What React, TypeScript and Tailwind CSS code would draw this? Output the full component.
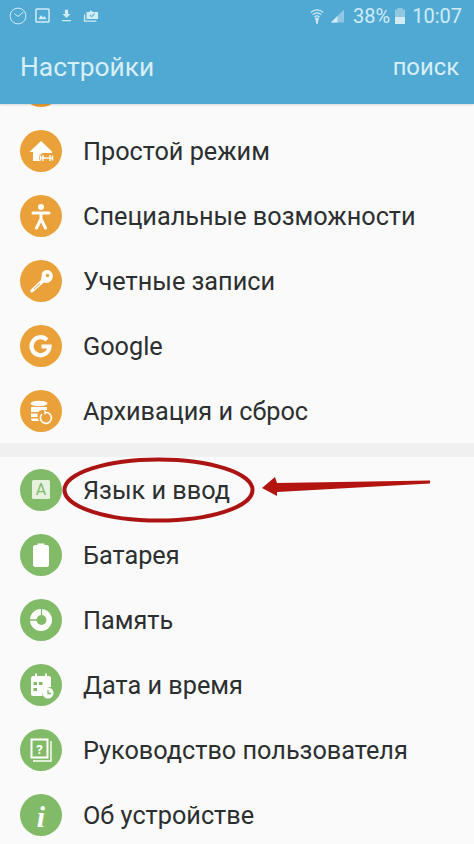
import React from 'react';

const ORANGE = 'bg-[#eba13a]';
const GREEN = 'bg-[#82bb68]';

// Row icons, drawn on a 42x42 grid in white
const HomeIcon = () => (
  <svg viewBox="0 0 42 42" className="w-[42px] h-[42px]">
    <path d="M21 11 L9.5 22 H13 V31 H20 C18 28 19 24 23 23 H32 V21.5 Z" fill="#fff" />
    <path d="M20 28 H33" stroke="#fff" strokeWidth="1.4" fill="none" />
    <path d="M20.5 25.5 V30.5 M23 25 V31 M30 25 V31 M32.5 25.5 V30.5" stroke="#fff" strokeWidth="1.4" fill="none" />
  </svg>
);
const PersonIcon = () => (
  <svg viewBox="0 0 42 42" className="w-[42px] h-[42px]">
    <circle cx="21" cy="12" r="3" fill="#fff" />
    <path d="M13 18 H29 M21 18 V25 M21 24 L16.5 33 M21 24 L25.5 33" stroke="#fff" strokeWidth="3" fill="none" strokeLinecap="round" />
  </svg>
);
const KeyIcon = () => (
  <svg viewBox="0 0 42 42" className="w-[42px] h-[42px]">
    <path d="M22 13 C24 9 30 9 32 13 C34 17 32 22 27 23 L24 22.5 L13 32 C11 33.5 9.5 31 11 29.5 L21 20 Z" fill="#fff" />
    <circle cx="27.5" cy="15.5" r="1.7" fill="#eba13a" />
    <path d="M14 29 L20 23.5" stroke="#eba13a" strokeWidth="1" />
  </svg>
);
const GoogleIcon = () => (
  <svg viewBox="0 0 42 42" className="w-[42px] h-[42px]">
    <path d="M27 15 A9 9 0 1 0 29.5 21.5 H21.5" stroke="#fff" strokeWidth="4.2" fill="none" />
  </svg>
);
const BackupIcon = () => (
  <svg viewBox="0 0 42 42" className="w-[42px] h-[42px]">
    <ellipse cx="19" cy="13.5" rx="8.5" ry="2.8" fill="#fff" />
    <path d="M11 17 H27 V20 H22 C20 20.5 19 21 18.5 22 H11 Z M11 23.5 H17.5 L17.5 27 H11 Z M11 28.5 H18 L19 31 H13 C12 31 11 30 11 29 Z" fill="#fff" />
    <path d="M22 24 A5.5 5.5 0 1 0 27 22.5" stroke="#fff" strokeWidth="1.6" fill="none" />
    <path d="M24 20 L27.5 22.5 L24.5 25 Z" fill="#fff" />
  </svg>
);
const LanguageIcon = () => (
  <svg viewBox="0 0 42 42" className="w-[42px] h-[42px]">
    <rect x="12" y="11" width="18" height="19" rx="1.5" fill="#e6f1e0" />
    <text x="21" y="26" textAnchor="middle" fontSize="16" fontFamily="Roboto, sans-serif" fill="#82bb68">A</text>
  </svg>
);
const BatteryIcon = () => (
  <svg viewBox="0 0 42 42" className="w-[42px] h-[42px]">
    <path d="M17.5 11 V9.5 H24.5 V11 H27 C28 11 29 12 29 13 V31 C29 32 28 33 27 33 H15 C14 33 13 32 13 31 V13 C13 12 14 11 15 11 Z" fill="#fff" />
  </svg>
);
const MemoryIcon = () => (
  <svg viewBox="0 0 42 42" className="w-[42px] h-[42px]">
    <circle cx="21" cy="21" r="11" fill="#fff" />
    <circle cx="21.5" cy="21" r="5" fill="#82bb68" />
    <path d="M21.5 9 V17 M9 21 H17" stroke="#82bb68" strokeWidth="1.3" />
  </svg>
);
const CalendarIcon = () => (
  <svg viewBox="0 0 42 42" className="w-[42px] h-[42px]">
    <path d="M13 12 H15 V9.5 H17 V12 H25 V9.5 H27 V12 H29 C30 12 31 13 31 14 V23 A8 8 0 0 0 22.5 32 H13 C12 32 11 31 11 30 V14 C11 13 12 12 13 12 Z" fill="#fff" />
    <rect x="13.5" y="18" width="3.5" height="3" fill="#82bb68" />
    <rect x="19" y="18" width="3.5" height="3" fill="#82bb68" />
    <rect x="13.5" y="24" width="3.5" height="3" fill="#82bb68" />
    <circle cx="28" cy="29" r="5.5" fill="#fff" />
    <path d="M28 26 V29.5 H31" stroke="#82bb68" strokeWidth="1.3" fill="none" />
  </svg>
);
const GuideIcon = () => (
  <svg viewBox="0 0 42 42" className="w-[42px] h-[42px]">
    <rect x="11.5" y="10.5" width="16" height="18" fill="none" stroke="#fff" strokeWidth="2" />
    <path d="M31 12 V32 H13" stroke="#fff" strokeWidth="1.4" fill="none" />
    <text x="19.5" y="25" textAnchor="middle" fontSize="13" fontWeight="700" fontFamily="Roboto, sans-serif" fill="#fff">?</text>
  </svg>
);
const InfoIcon = () => (
  <svg viewBox="0 0 42 42" className="w-[42px] h-[42px]">
    <text x="21" y="33" textAnchor="middle" fontSize="30" fontWeight="700" fontStyle="italic" fontFamily="'Liberation Serif', serif" fill="#fff">i</text>
  </svg>
);

const Row: React.FC<{ color: string; label: string; icon?: React.ReactNode }> = ({ color, label, icon }) => (
  <div className="h-[65px] flex items-center pl-5">
    <div className={`w-[42px] h-[42px] rounded-full shrink-0 ${color}`}>{icon}</div>
    <span className="ml-[21px] mt-[2px] text-[25.25px] text-[#2c2f30] whitespace-nowrap">{label}</span>
  </div>
);

const StatusBar = () => (
  <div className="h-[31px] flex items-center justify-between pl-[9px] pr-[12px] text-[#d0ecf7]">
    <div className="flex items-center">
      <svg viewBox="0 0 20 20" className="w-[18px] h-[18px]" fill="none" stroke="currentColor" strokeWidth="1.1">
        <circle cx="10" cy="10" r="8.8" />
        <path d="M10 10.5 L6 7.5 M10 10.5 L16 5.5" />
      </svg>
      <svg viewBox="0 0 16 16" className="w-[15px] h-[15px] ml-[8px]" fill="none">
        <rect x="1" y="1" width="14" height="14" rx="1" stroke="currentColor" strokeWidth="1.6" />
        <path d="M3.5 12 L6.5 7.5 L8.5 10 L10 8.5 L12.5 12 Z" fill="currentColor" />
      </svg>
      <svg viewBox="0 0 16 16" className="w-[13px] h-[15px] ml-[10px]" fill="currentColor">
        <path d="M6 1 H10 V6 H13 L8 11 L3 6 H6 Z M2.5 13.5 H13.5 V15 H2.5 Z" />
      </svg>
      <svg viewBox="0 0 18 16" className="w-[16px] h-[15px] ml-[10px]" fill="currentColor">
        <path d="M4 4 H7 L9 2 L11 4 H16 C17 4 17 5 17 5 V12 H4 Z M7.5 8 L9.5 10 L13.5 6.2 L12.7 5.5 L9.5 8.5 L8.3 7.2 Z" fillRule="evenodd" />
        <path d="M1 7 H2.5 V13.5 H15 V15 H1 Z" />
      </svg>
    </div>
    <div className="flex items-center">
      <svg viewBox="0 0 16 20" className="w-[14px] h-[18px]" fill="none" stroke="currentColor" strokeWidth="1.3">
        <path d="M1 6 C5 2 11 2 15 6 M3 8.5 C6 6 10 6 13 8.5 M5 11 C7 9.5 9 9.5 11 11" />
        <path d="M8 13 L6.5 12.5 L8 19 L9.5 12.5 Z" fill="currentColor" />
      </svg>
      <svg viewBox="0 0 16 16" className="w-[15px] h-[16px] ml-[6px]">
        <path d="M15 1 V15 H1 Z" fill="#8fc8e0" />
        <path d="M8 8 V15 H1 Z" fill="currentColor" />
      </svg>
      <span className="ml-[8px] text-[20px] leading-none">38%</span>
      <svg viewBox="0 0 11 18" className="w-[12px] h-[18px] ml-[4px]">
        <path d="M3 1 H8 V2.5 H10.5 V17 H0.5 V2.5 H3 Z" fill="#8fc8e0" />
        <rect x="0.5" y="10" width="10" height="7" fill="currentColor" />
      </svg>
      <span className="ml-[6px] text-[20px] leading-none">10:07</span>
    </div>
  </div>
);

export default function App() {
  return (
    <div className="relative w-[474px] h-[844px] overflow-hidden bg-[#fafafa] font-['Roboto',sans-serif]">
      <header className="relative z-10 h-[104px] bg-[#50a9d2] shadow-[0_1px_2px_rgba(0,0,0,0.15)]">
        <StatusBar />
        <div className="flex items-center justify-between h-[73px] pl-5 pr-[15px]">
          <span className="text-[26.4px] text-[#d8eff8]">Настройки</span>
          <span className="text-[23.8px] text-[#d8eff8]">поиск</span>
        </div>
      </header>

      <div className="-mt-[51px]">
        <Row color={ORANGE} label="" />
        <Row color={ORANGE} label="Простой режим" icon={<HomeIcon />} />
        <Row color={ORANGE} label="Специальные возможности" icon={<PersonIcon />} />
        <Row color={ORANGE} label="Учетные записи" icon={<KeyIcon />} />
        <Row color={ORANGE} label="Google" icon={<GoogleIcon />} />
        <Row color={ORANGE} label="Архивация и сброс" icon={<BackupIcon />} />
        <div className="h-[14px] bg-[#f0f0f0]" />
        <Row color={GREEN} label="Язык и ввод" icon={<LanguageIcon />} />
        <Row color={GREEN} label="Батарея" icon={<BatteryIcon />} />
        <Row color={GREEN} label="Память" icon={<MemoryIcon />} />
        <Row color={GREEN} label="Дата и время" icon={<CalendarIcon />} />
        <Row color={GREEN} label="Руководство пользователя" icon={<GuideIcon />} />
        <Row color={GREEN} label="Об устройстве" icon={<InfoIcon />} />
      </div>

      {/* red annotation drawn over the list */}
      <svg viewBox="0 0 474 844" className="absolute inset-0 z-20 w-[474px] h-[844px] pointer-events-none">
        <ellipse cx="158.5" cy="490" rx="94" ry="30.5" fill="none" stroke="#ab1412" strokeWidth="4" />
        <path d="M262 488 L275 477 L277 483 L430 480.5 L430 483.5 L277 492 L277 496 Z" fill="#b31410" />
      </svg>
    </div>
  );
}
